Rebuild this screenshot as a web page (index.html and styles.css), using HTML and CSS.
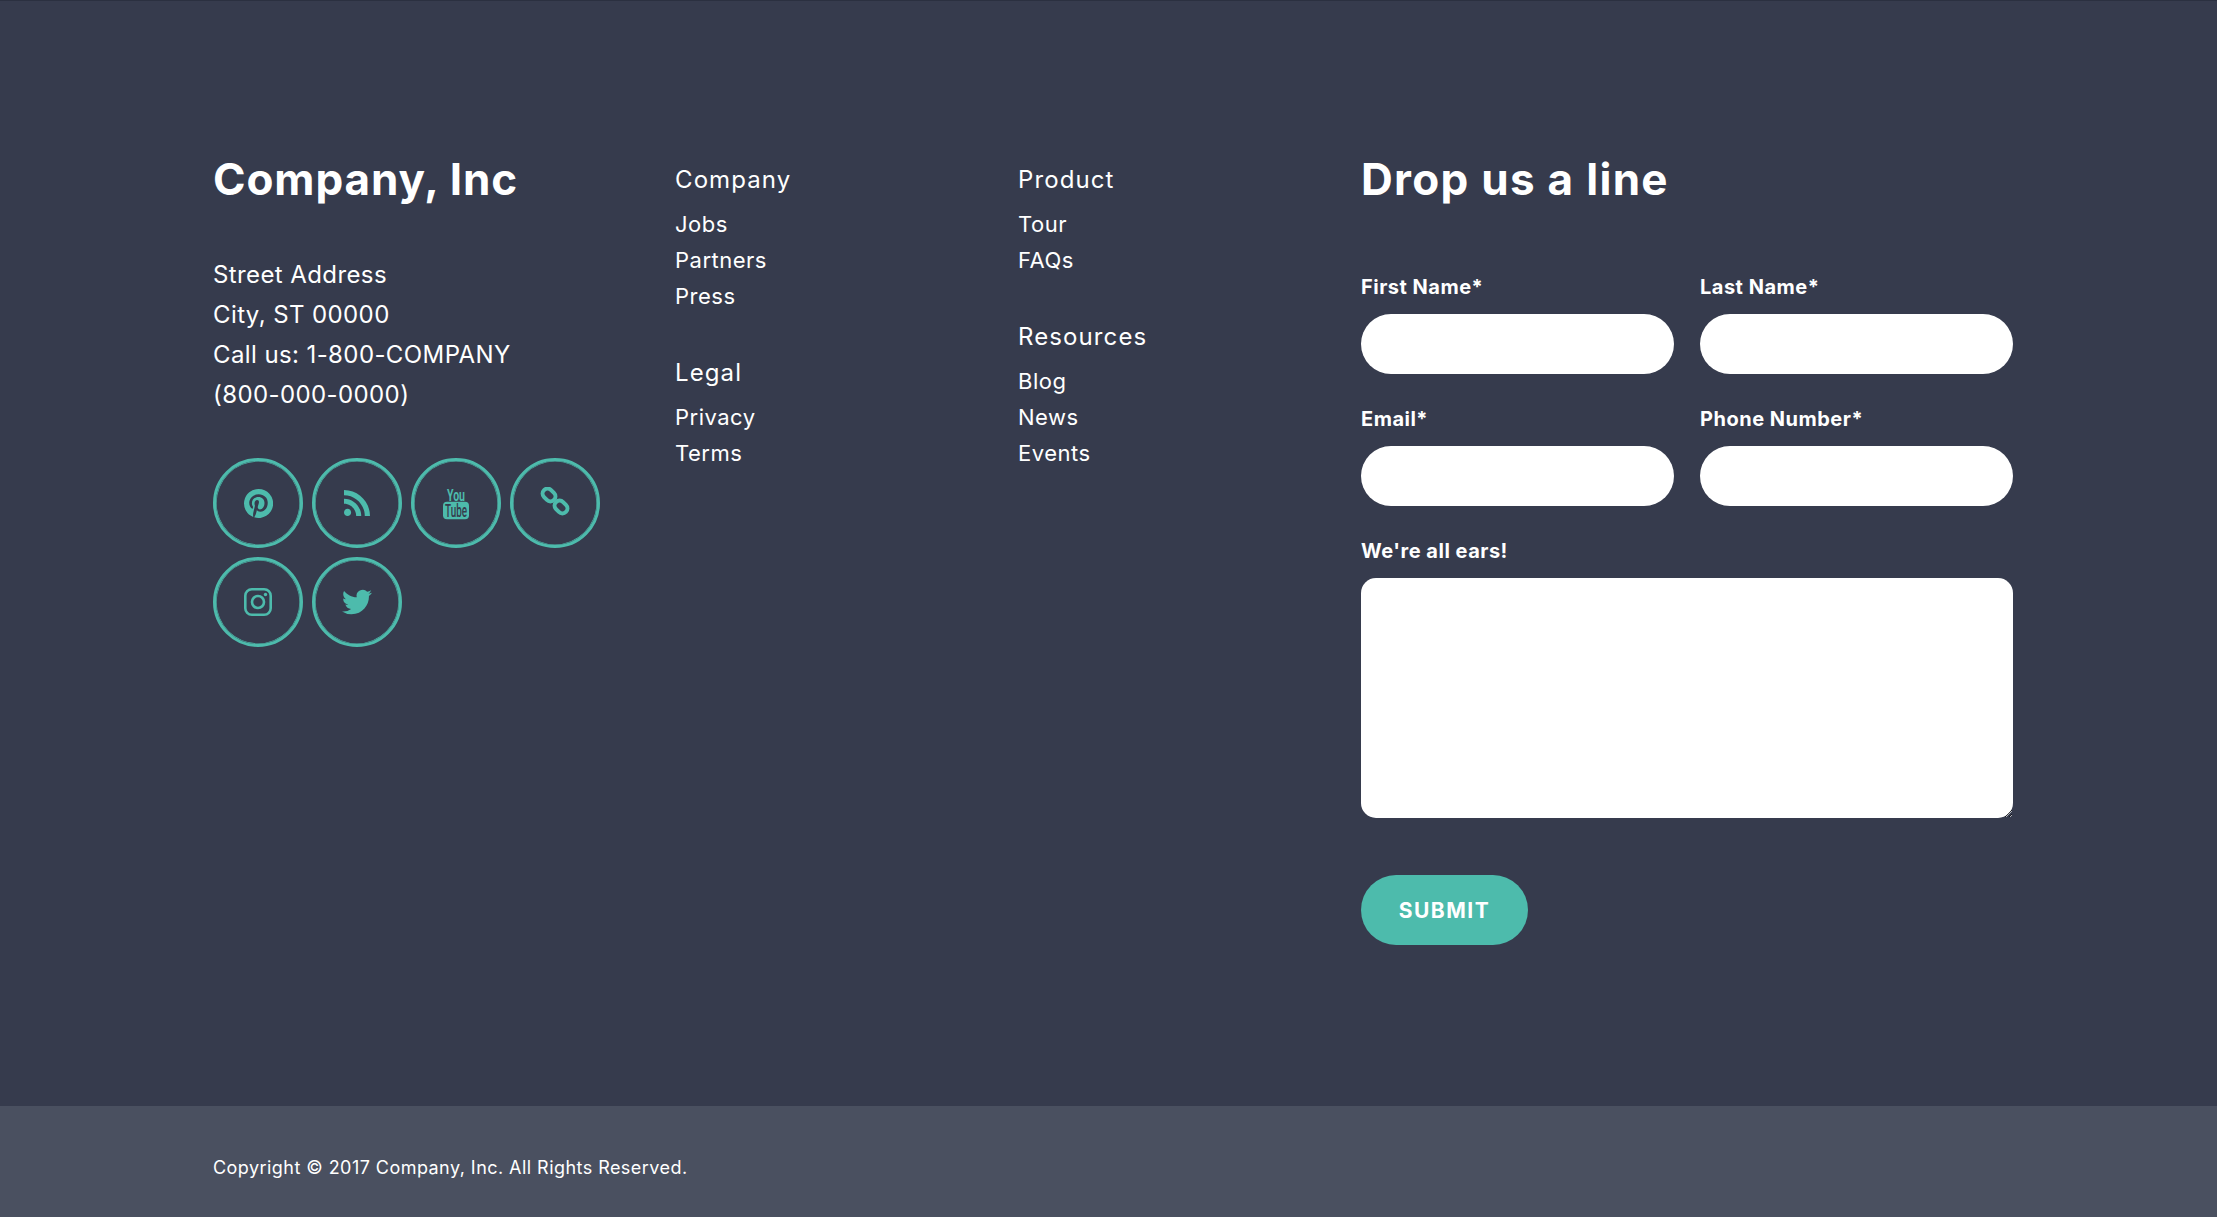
FILE: index.html
```html
<!DOCTYPE html>
<html lang="en">
<head>
<meta charset="utf-8">
<title>Company, Inc</title>
<link rel="stylesheet" href="styles.css">
</head>
<body>
<footer class="site-footer">
  <div class="footer-main">
    <section class="about">
      <h2 class="brand">Company, Inc</h2>
      <address class="address">Street Address<br>City, ST 00000<br>Call us: 1-800-COMPANY<br>(800-000-0000)</address>
      <div class="socials">
        <a class="social" href="#"><svg class="ic-pin" viewBox="0 0 24 24"><path d="M12 0a12 12 0 0 0-4.37 23.17c-.1-.95-.2-2.4.04-3.44l1.4-5.96s-.36-.72-.36-1.78c0-1.67.97-2.92 2.17-2.92 1.02 0 1.52.77 1.52 1.69 0 1.03-.65 2.56-.99 3.98-.28 1.19.6 2.16 1.78 2.16 2.13 0 3.77-2.25 3.77-5.49 0-2.87-2.06-4.88-5.01-4.88-3.41 0-5.41 2.56-5.41 5.2 0 1.03.4 2.14.89 2.74.1.12.11.22.08.34l-.33 1.36c-.05.22-.18.27-.41.16-1.5-.7-2.43-2.89-2.43-4.65 0-3.78 2.75-7.26 7.92-7.26 4.16 0 7.4 2.96 7.4 6.93 0 4.13-2.6 7.46-6.22 7.46-1.21 0-2.36-.63-2.75-1.38l-.75 2.85c-.27 1.04-1 2.35-1.49 3.15A12 12 0 1 0 12 0z"/></svg></a>
        <a class="social" href="#"><svg class="ic-rss" viewBox="0 0 24 24"><path d="M19.199 24C19.199 13.467 10.533 4.8 0 4.8V0c13.165 0 24 10.835 24 24h-4.801zM3.291 17.415c1.814 0 3.293 1.479 3.293 3.295 0 1.813-1.485 3.29-3.301 3.29C1.47 24 0 22.526 0 20.71s1.475-3.294 3.291-3.295zM15.909 24h-4.665c0-6.169-5.075-11.245-11.244-11.245V8.09c8.727 0 15.909 7.184 15.909 15.91z"/></svg></a>
        <a class="social" href="#"><svg class="ic-yt" viewBox="-16 -6 60 40"><text class="yt-you" x="14" y="11.5" text-anchor="middle" textLength="18" lengthAdjust="spacingAndGlyphs">You</text><rect class="yt-box" x="1" y="12.8" width="26" height="17.5" rx="4"/><text class="yt-tube" x="14" y="28" text-anchor="middle" textLength="22" lengthAdjust="spacingAndGlyphs">Tube</text></svg></a>
        <a class="social" href="#"><svg class="ic-link" viewBox="-1 1 32 32"><rect x="2" y="4" width="14" height="10" rx="5" transform="rotate(45 9 9)"/><rect x="14" y="16" width="14" height="10" rx="5" transform="rotate(45 21 21)"/></svg></a>
        <a class="social" href="#"><svg class="ic-ig" viewBox="0 0 28 28"><rect x="1.3" y="1.3" width="25.4" height="25.4" rx="6.5"/><circle cx="14" cy="14" r="6"/><circle class="ig-dot" cx="21.5" cy="6.5" r="1.7"/></svg></a>
        <a class="social" href="#"><svg class="ic-tw" viewBox="0 0 24 24"><path d="M23.953 4.57a10 10 0 01-2.825.775 4.958 4.958 0 002.163-2.723c-.951.555-2.005.959-3.127 1.184a4.92 4.92 0 00-8.384 4.482C7.69 8.095 4.067 6.13 1.64 3.162a4.822 4.822 0 00-.666 2.475c0 1.71.87 3.213 2.188 4.096a4.904 4.904 0 01-2.228-.616v.06a4.923 4.923 0 003.946 4.827 4.996 4.996 0 01-2.212.085 4.936 4.936 0 004.604 3.417 9.867 9.867 0 01-6.102 2.105c-.39 0-.779-.023-1.17-.067a13.995 13.995 0 007.557 2.209c9.053 0 13.998-7.496 13.998-13.985 0-.21 0-.42-.015-.63A9.935 9.935 0 0024 4.59z"/></svg></a>
      </div>
    </section>
    <nav class="links">
      <h3 class="links-title">Company</h3>
      <ul class="link-list"><li>Jobs</li><li>Partners</li><li>Press</li></ul>
      <h3 class="links-title legal">Legal</h3>
      <ul class="link-list"><li>Privacy</li><li>Terms</li></ul>
    </nav>
    <nav class="links">
      <h3 class="links-title">Product</h3>
      <ul class="link-list"><li>Tour</li><li>FAQs</li></ul>
      <h3 class="links-title resources">Resources</h3>
      <ul class="link-list"><li>Blog</li><li>News</li><li>Events</li></ul>
    </nav>
    <form class="contact">
      <h2 class="brand form-title">Drop us a line</h2>
      <div class="fields">
        <label class="field"><span class="label">First Name*</span><input class="input" type="text"></label>
        <label class="field"><span class="label">Last Name*</span><input class="input" type="text"></label>
        <label class="field"><span class="label">Email*</span><input class="input" type="text"></label>
        <label class="field"><span class="label">Phone Number*</span><input class="input" type="text"></label>
        <label class="field wide"><span class="label">We're all ears!</span><textarea class="textarea"></textarea></label>
      </div>
      <button class="submit" type="button">SUBMIT</button>
    </form>
  </div>
  <div class="footer-bar">Copyright © 2017 Company, Inc. All Rights Reserved.</div>
</footer>
</body>
</html>
```
FILE: styles.css
```css
* { box-sizing: border-box; }
html, body { margin: 0; padding: 0; }
body {
  font-family: "Inter", "Open Sans", sans-serif;
  color: #fff;
  background: #363b4d;
}
.site-footer { display: flex; flex-direction: column; min-height: 100vh; }
.footer-main {
  height: 1106px;
  padding: 149px 0 0 213px;
  display: grid;
  grid-template-columns: 462px 343px 343px 652px;
  align-items: start;
  background: #363b4d;
  border-top: 1px solid #2b3040;
}
.brand { margin: 0; padding-bottom: 2px; font-size: 44px; line-height: 58px; font-weight: 700; letter-spacing: .9px; }
.form-title { letter-spacing: 1.3px; }
.address { margin-top: 45px; font-style: normal; font-size: 24px; line-height: 40px; letter-spacing: .4px; }
.socials { display: flex; flex-wrap: wrap; gap: 9px 9px; width: 400px; margin-top: 43px; }
.social {
  width: 90px; height: 90px; border: 3px solid #4dbbac; border-radius: 50%;
  box-shadow: inset 0 0 0 .6px #4dbbac;
  display: flex; align-items: center; justify-content: center;
}
.social svg { display: block; fill: #4dbbac; }
.ic-pin { width: 29px; height: 29px; }
.ic-rss { width: 26px; height: 26px; }
.ic-yt { width: 60px; height: 40px; }
.ic-link { width: 32px; height: 32px; fill: none !important; stroke: #4dbbac; stroke-width: 4; }
.ic-ig { width: 28px; height: 28px; fill: none !important; stroke: #4dbbac; stroke-width: 2.6; }
.ig-dot { fill: #4dbbac; stroke: none; }
.ic-tw { width: 30px; height: 30px; }
.yt-you { font: 700 16px "Roboto", sans-serif; fill: #4dbbac; }
.yt-tube { font: 500 17.5px "Roboto", sans-serif; fill: #363b4d; }
.yt-box { fill: #4dbbac; }
.links { padding-top: 10px; }
.links-title { margin: 0; font-size: 24px; line-height: 40px; font-weight: 400; letter-spacing: 1.1px; }
.legal { margin-top: 39px; }
.resources { margin-top: 39px; }
.link-list { list-style: none; margin: 0; padding: 6px 0 0; font-size: 22px; line-height: 36px; letter-spacing: .5px; }
.fields { display: grid; grid-template-columns: 313px 313px; column-gap: 26px; row-gap: 31px; margin-top: 63px; }
.field { display: block; }
.wide { grid-column: 1 / 3; }
.label { display: block; font-size: 20px; line-height: 26px; font-weight: 700; letter-spacing: .5px; margin-bottom: 14px; padding-top: 1px; }
.input { display: block; width: 100%; height: 60px; border: 0; border-radius: 30px; background: #fff; }
.textarea { display: block; width: 100%; height: 240px; border: 0; border-radius: 15px; background: #fff; resize: vertical; }
.submit {
  display: block; margin-top: 57px; width: 167px; height: 70px; border: 0; border-radius: 35px;
  background: #4dbbac; color: #fff; font: 700 21px "Inter", sans-serif; letter-spacing: 1.5px;
}
.footer-bar {
  flex: 1; background: #4a5060; padding: 12px 0 0 213px;
  display: flex; align-items: center; font-size: 18px; letter-spacing: .45px;
}
```
